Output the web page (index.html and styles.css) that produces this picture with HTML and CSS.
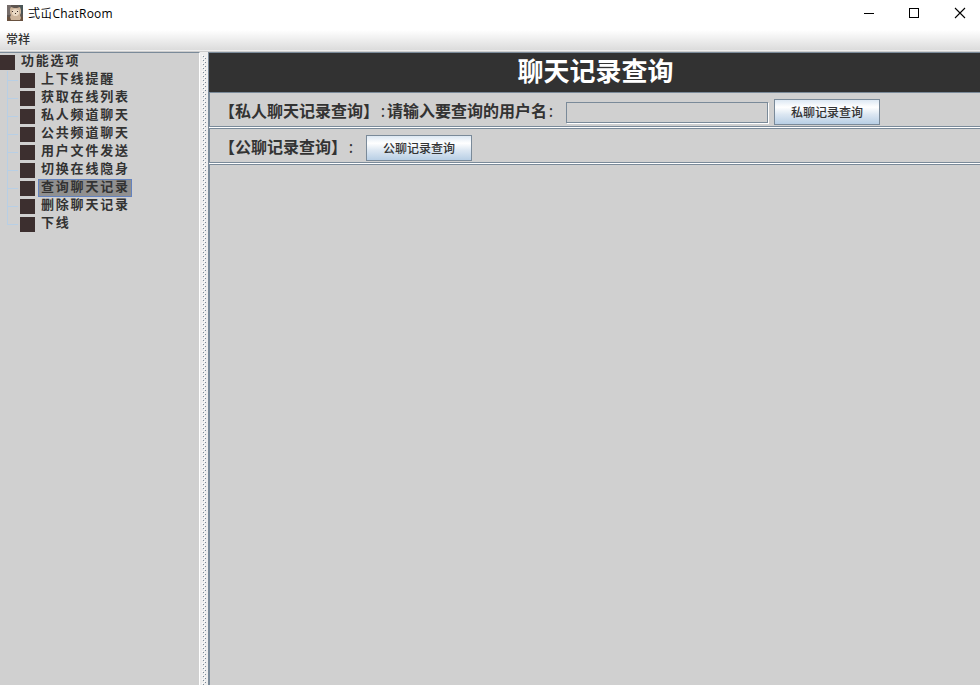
FILE: index.html
```
<!DOCTYPE html>
<html lang="zh-CN">
<head>
    <meta charset="UTF-8">
    <meta name="viewport" content="width=device-width, initial-scale=1.0">
    <title>弍屲ChatRoom</title>
    <link rel="stylesheet" href="styles.css">
</head>
<body>
    <div class="window">
        <div class="titlebar">
            <svg class="app-icon" width="16" height="16" viewBox="0 0 16 16">
                <rect width="16" height="16" fill="#5d5550"/>
                <rect width="4" height="10" fill="#756c69"/>
                <rect x="12" width="4" height="9" fill="#4a5557"/>
                <rect y="12" width="16" height="4" fill="#68513f"/>
                <path d="M3 4l1-2 3 1h3l3-1 1 3v3l-1 2 1 3-1 2H4l-1-3 1-2-1-2z" fill="#cdb49b"/>
                <path d="M5 5l3-1 4 1v4l-2 2H7L5 9z" fill="#ead8c3"/>
                <path d="M5 6h1v1H5zM10 6h1v1h-1zM8 8h1v1H8z" fill="#3b2c27"/>
            </svg>
            <span class="app-name">弍屲ChatRoom</span>
            <div class="controls">
                <svg width="46" height="26" viewBox="0 0 46 26"><path d="M18 13.5h10" stroke="#000"/></svg>
                <svg width="46" height="26" viewBox="0 0 46 26"><rect x="17.5" y="8.5" width="9" height="9" fill="none" stroke="#000"/></svg>
                <svg width="46" height="26" viewBox="0 0 46 26"><path d="M17 8l10 10M27 8L17 18" stroke="#000" stroke-width="1.1"/></svg>
            </div>
        </div>

        <div class="menubar">常祥</div>

        <div class="split">
            <div class="sidebar">
                <div class="node root"><i class="node-icon"></i><span class="node-text">功能选项</span></div>
                <div class="children">
                    <div class="node"><i class="node-icon"></i><span class="node-text">上下线提醒</span></div>
                    <div class="node"><i class="node-icon"></i><span class="node-text">获取在线列表</span></div>
                    <div class="node"><i class="node-icon"></i><span class="node-text">私人频道聊天</span></div>
                    <div class="node"><i class="node-icon"></i><span class="node-text">公共频道聊天</span></div>
                    <div class="node"><i class="node-icon"></i><span class="node-text">用户文件发送</span></div>
                    <div class="node"><i class="node-icon"></i><span class="node-text">切换在线隐身</span></div>
                    <div class="node"><i class="node-icon"></i><span class="node-text selected">查询聊天记录</span></div>
                    <div class="node"><i class="node-icon"></i><span class="node-text">删除聊天记录</span></div>
                    <div class="node"><i class="node-icon"></i><span class="node-text">下线</span></div>
                </div>
            </div>

            <div class="divider">
                <svg width="8" height="633">
                    <defs>
                        <pattern id="bumps" width="4" height="4" patternUnits="userSpaceOnUse" x="2" y="3">
                            <path d="M0 0h1v1H0zM2 2h1v1H2z" fill="#fff"/>
                            <path d="M1 1h1v1H1zM3 3h1v1H3z" fill="#7a8a99"/>
                        </pattern>
                    </defs>
                    <rect x="2" y="3" width="4" height="630" fill="url(#bumps)"/>
                </svg>
            </div>

            <div class="main">
                <h1 class="heading">聊天记录查询</h1>
                <div class="row">
                    <label class="row-label" for="username">【私人聊天记录查询】<span class="half">:</span>请输入要查询的用户名<span class="half">:</span></label>
                    <input class="field" id="username" type="text">
                    <button class="btn">私聊记录查询</button>
                </div>
                <div class="row">
                    <span class="row-label">【公聊记录查询】<span class="half">:</span></span>
                    <button class="btn">公聊记录查询</button>
                </div>
                <div class="result"></div>
            </div>
        </div>
    </div>
</body>
</html>
```

FILE: styles.css
```
* {
    box-sizing: border-box;
}
body {
    margin: 0;
    overflow: hidden;
    font-family: "Noto Sans CJK SC", sans-serif;
    color: #333;
}
.window {
    display: flex;
    flex-direction: column;
    height: 685px;
    background: #fff;
}
.titlebar {
    display: flex;
    align-items: center;
    height: 30px;
    padding: 0 0 4px 7px;
}
.app-name {
    margin-left: 5px;
    padding-top: 2px;
    font-family: "Open Sans", "Noto Sans CJK SC", sans-serif;
    font-size: 12px;
    line-height: 16px;
    letter-spacing: 0.2px;
    color: #000;
}
.controls {
    display: flex;
    margin-left: auto;
    margin-right: -4px;
}
.menubar {
    height: 22px;
    padding-left: 6px;
    border-bottom: 1px solid #ccc;
    background: linear-gradient(#fff, #dadada);
    box-shadow: inset 0 -1px #eee;
    font-size: 12px;
    font-weight: 500;
    line-height: 17px;
}
.split {
    display: flex;
    flex: 1;
    min-height: 0;
    background: #eee;
}

/* option tree */
.sidebar {
    width: 200px;
    border-top: 1px solid #7a8a99;
    border-right: 1px solid #fff;
    background: #d0d0d0;
}
.node {
    position: relative;
    display: flex;
    height: 18px;
}
.node-icon {
    width: 15px;
    height: 15px;
    margin-top: 2px;
    background: #3c2f2f;
}
.node-text {
    height: 18px;
    margin-left: 3px;
    padding: 0 0 0 2px;
    border: 1px solid transparent;
    font-family: KaiTi, STKaiti, "Noto Sans CJK SC", sans-serif;
    font-size: 13px;
    font-weight: 600;
    line-height: 12px;
    letter-spacing: 1.8px;
    white-space: nowrap;
}
.node-text.selected {
    width: 94px;
    border-color: #6382bf;
    background: #909090;
}
.children .node {
    padding-left: 20px;
}
.children .node::before {
    content: "";
    position: absolute;
    left: 7px;
    top: 0;
    width: 10px;
    height: 18px;
    border-left: 1px solid #b8cfe5;
    background: linear-gradient(#b8cfe5, #b8cfe5) 0 9px / 100% 1px no-repeat;
}
.children .node:last-child::before {
    height: 10px;
}

.divider {
    width: 8px;
}
.divider svg {
    display: block;
}

/* query panel */
.main {
    display: flex;
    flex: 1;
    flex-direction: column;
    border-top: 1px solid #7a8a99;
    border-left: 1px solid #7a8a99;
    background: #d0d0d0;
}
.heading {
    height: 39px;
    margin: 0;
    padding-left: 2px;
    background: #323232;
    color: #fff;
    font-size: 26px;
    font-weight: 600;
    line-height: 34px;
    text-align: center;
}
.row {
    display: flex;
    align-items: center;
    height: 35px;
    padding: 5px 0 0 9px;
    border: solid #7a8a99;
    border-width: 1px 0 1px 1px;
    box-shadow: 0 1px #fff;
}
.row + .row {
    margin-top: 1px;
}
.row-label {
    display: flex;
    padding-bottom: 4px;
    font-size: 16px;
    font-weight: 700;
    line-height: 20px;
    white-space: nowrap;
}
.half {
    width: 8px;
    text-align: center;
    font-weight: 400;
}
.field {
    width: 202px;
    height: 21px;
    margin: 1px 0 0 11px;
    padding: 0;
    border: 1px solid #7a8a99;
    background: #d0d0d0;
    box-shadow: 1px 1px #fff;
}
.btn {
    width: 106px;
    height: 26px;
    margin-left: 6px;
    padding: 0;
    border: 1px solid #7a8a99;
    background: linear-gradient(#dde8f3, #fff 30%, #dce7f2 60%, #b8cfe5);
    color: #333;
    font-family: "Noto Sans CJK SC", sans-serif;
    font-size: 12px;
    font-weight: 500;
    line-height: 22px;
}
.row-label + .btn {
    margin-left: 11px;
}
.result {
    flex: 1;
    margin-top: 1px;
    border: solid #7a8a99;
    border-width: 1px 0 0 1px;
}
```
